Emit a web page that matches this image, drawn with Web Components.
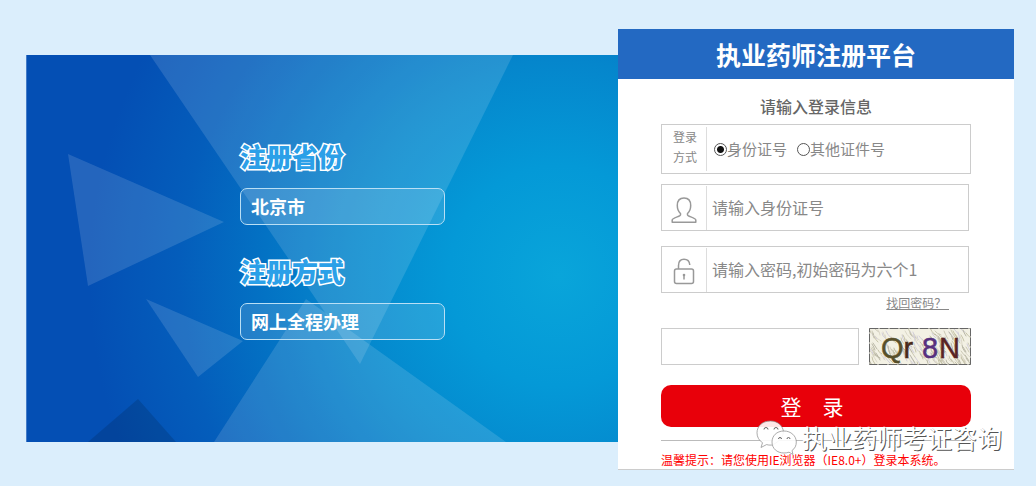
<!DOCTYPE html>
<html lang="zh-CN">
<head>
<meta charset="utf-8">
<meta name="viewport" content="width=device-width, initial-scale=1">
<title>执业药师注册平台</title>
<style>
  html { min-height: 100%; background: #dbeefc; }
  body { margin: 0; font-family: "Noto Sans CJK SC", sans-serif; font-size: 16px; color: #888; }
</style>
</head>
<body>
<login-page>
  <promo-panel slot="promo">
    <choice-field label="注册省份" options="北京市"></choice-field>
    <choice-field label="注册方式" options="网上全程办理"></choice-field>
  </promo-panel>
  <login-card slot="card" heading="执业药师注册平台">
    <login-form></login-form>
    <channel-mark slot="mark">执业药师考证咨询</channel-mark>
  </login-card>
</login-page>

<script>
const define = (name, html, setup) => {
  const template = document.createElement('template');
  template.innerHTML = html;
  customElements.define(name, class extends HTMLElement {
    constructor() {
      super();
      this.attachShadow({ mode: 'open' }).append(template.content.cloneNode(true));
    }
    connectedCallback() { if (setup) setup(this, this.shadowRoot); }
  });
};

define('login-page', `
  <style>
    :host { display: block; padding: 29px 22px 16px 26px; }
    main { display: grid; grid-template-columns: minmax(0, 1fr) 396px; align-items: start; }
    .promo { margin-top: 26px; }
  </style>
  <main>
    <div class="promo"><slot name="promo"></slot></div>
    <slot name="card"></slot>
  </main>`);

define('promo-panel', `
  <style>
    :host {
      display: grid; grid-template-columns: 205px; justify-content: center; align-content: start;
      row-gap: 32px; position: relative; isolation: isolate; box-sizing: border-box;
      min-height: 387px; padding: 87px 0 102px 41px;
      background: radial-gradient(circle at 90% 57%, #09a5da 0, #0499d7 110px, #0586cc 215px, #0372c4 295px, #045dbb 380px, #044fb4 470px);
    }
    svg { position: absolute; inset: 0; width: 100%; height: 100%; z-index: -1; }
  </style>
  <svg viewBox="0 0 592 387" preserveAspectRatio="xMinYMin slice" aria-hidden="true">
    <g fill="#fff" fill-opacity=".13">
      <path d="M124 0H487L334 309Z"/>
      <path d="M42 99L198 167L62 231Z"/>
      <path d="M120 244L217 286L172 322Z"/>
      <path d="M280 244L480 387H188Z"/>
    </g>
    <path d="M112 344L150 387H62Z" fill="#000" fill-opacity=".13"/>
    <path d="M0 0H1V387H0Z" fill="#fff" fill-opacity=".25"/>
  </svg>
  <slot></slot>`);

define('choice-field', `
  <style>
    :host { display: flex; flex-direction: column; gap: 18px; }
    label {
      font-size: 26px; line-height: 28px; font-weight: 900; color: #2ba0e8;
      -webkit-text-stroke: 3px #fff; paint-order: stroke fill; stroke-linejoin: round;
    }
    select {
      appearance: none; box-sizing: border-box; width: 100%; height: 37px; margin: 0; padding: 0 10px 2px;
      border: 1px solid #b9dff5; border-radius: 7px; background: rgba(255, 255, 255, .13);
      font: bold 18px/24px "Noto Sans CJK SC", sans-serif; color: #fff;
    }
    option { color: #333; }
  </style>
  <label for="choice"></label>
  <select id="choice"></select>`, (host, root) => {
    root.querySelector('label').textContent = host.getAttribute('label');
    root.querySelector('select').replaceChildren(
      ...host.getAttribute('options').split(',').map(text => new Option(text)));
});

define('login-card', `
  <style>
    :host { display: block; position: relative; background: #fff; border-bottom: 1px solid #ccc; }
    h1 { margin: 0; background: #2369c2; color: #fff; font-size: 25px; line-height: 50px; font-weight: 700; text-align: center; }
    .body { padding: 15px 43px 0; }
    .mark { position: absolute; right: 12px; bottom: 12px; pointer-events: none; }
  </style>
  <h1></h1>
  <div class="body"><slot></slot></div>
  <div class="mark"><slot name="mark"></slot></div>`, (host, root) => {
    root.querySelector('h1').textContent = host.getAttribute('heading');
});

define('login-form', `
  <style>
    :host { display: block; }
    form { display: flex; flex-direction: column; }
    h2 { margin: 0 0 6px; font-size: 16px; line-height: 24px; font-weight: 500; color: #666; text-align: center; }
    id-kind { margin-bottom: 10px; }
    icon-field { margin-right: 2px; }
    .account { margin-bottom: 15px; }
    a { align-self: flex-end; margin-right: 22px; font-size: 12px; line-height: 20px; color: #888; white-space: pre; }
    .captcha { display: grid; grid-template-columns: minmax(0, 1fr) 102px; gap: 10px; margin: 15px 0 20px; }
    .captcha input { box-sizing: border-box; width: 100%; height: 37px; margin: 0; padding: 0 8px; border: 1px solid #ccc; border-radius: 0; font: inherit; color: #333; }
    button {
      height: 42px; padding: 0 8px 0 0; border: 0; border-radius: 10px; background: #e8000a; color: #fff;
      font: 21px/42px "Noto Sans CJK SC", sans-serif; margin-bottom: 13px;
    }
    p { margin: 0; padding-top: 10px; border-top: 1px solid #bbb; font-size: 12px; line-height: 18px; color: #f00; white-space: nowrap; }
  </style>
  <form onsubmit="return false">
    <h2>请输入登录信息</h2>
    <id-kind></id-kind>
    <icon-field class="account" kind="text" hint="请输入身份证号">
      <svg width="28" height="28" viewBox="0 0 28 28" fill="none" stroke="#999" stroke-width="1.5" stroke-linejoin="round" aria-hidden="true">
        <path d="M10.5 17.5C8.300 15.500 7.300 12.500 7.300 9.500C7.300 5 9.500 2 14 2S20.700 5 20.700 9.500C20.700 12.500 19.700 15.500 17.500 17.500V19C17.500 20.500 25.500 21.500 25.800 24V26.300H2.200V24C2.500 21.500 10.500 20.500 10.500 19Z"/>
      </svg>
    </icon-field>
    <icon-field kind="password" hint="请输入密码,初始密码为六个1">
      <svg width="28" height="28" viewBox="0 0 28 28" fill="none" stroke="#999" stroke-width="1.500" aria-hidden="true">
        <rect x="4.500" y="11" width="19" height="14.500" rx="2"/>
        <path d="M8.500 11V7.500C8.500 3.500 10.500 1.200 14 1.200C17 1.200 19.500 3 19.800 7"/>
        <circle cx="14" cy="17" r="1.300" fill="#999" stroke="none"/>
        <path d="M14 17V21.500"/>
      </svg>
    </icon-field>
    <a href="#recover">找回密码？ </a>
    <div class="captcha">
      <input type="text" aria-label="验证码" autocomplete="off">
      <captcha-image></captcha-image>
    </div>
    <button type="submit">登　录</button>
    <p>温馨提示：请您使用IE浏览器（IE8.0+）登录本系统。</p>
  </form>`);

define('id-kind', `
  <style>
    :host { display: block; }
    fieldset {
      display: grid; grid-template-columns: 45px 1fr; align-items: center; box-sizing: border-box;
      min-width: 0; height: 50px; margin: 0; padding: 2px 0; border: 1px solid #ccc;
    }
    .name { align-self: stretch; padding: 0 9px 0 11px; border-right: 1px solid #ddd; font-size: 12px; line-height: 20px; box-sizing: border-box; }
    .set { display: flex; gap: 10px; padding-left: 7px; }
    label { display: flex; align-items: center; font-size: 15px; line-height: 24px; white-space: nowrap; }
    input { appearance: none; width: 13px; height: 13px; margin: 0; border: 1px solid #555; border-radius: 50%; background: #fff; box-sizing: border-box; }
    input:checked { background: radial-gradient(circle, #111 0 3px, #fff 4px); }
  </style>
  <fieldset aria-labelledby="name">
    <div class="name" id="name">登录<br>方式</div>
    <div class="set">
      <label><input type="radio" name="kind" checked>身份证号</label>
      <label><input type="radio" name="kind">其他证件号</label>
    </div>
  </fieldset>`);

define('icon-field', `
  <style>
    :host { display: block; }
    label {
      display: grid; grid-template-columns: 45px minmax(0, 1fr); box-sizing: border-box;
      height: 47px; padding-top: 1px; border: 1px solid #ccc;
    }
    span { display: grid; place-items: center; border-right: 1px solid #ddd; padding-top: 4px; }
    input { width: 100%; box-sizing: border-box; margin: 0; padding: 0 5px 2px; border: 0; outline: 0; background: none; font: inherit; color: #333; }
    input::placeholder { color: #888; opacity: 1; }
  </style>
  <label><span><slot></slot></span><input></label>`, (host, root) => {
    const input = root.querySelector('input');
    input.type = host.getAttribute('kind');
    input.placeholder = host.getAttribute('hint');
    input.setAttribute('aria-label', input.placeholder);
});

define('captcha-image', `
  <style>
    :host { display: block; height: 37px; }
    svg { display: block; width: 100%; height: 100%; font-family: "Liberation Sans", sans-serif; }
  </style>
  <svg viewBox="0 0 102 37" role="img" aria-label="验证码图片">
    <rect width="102" height="37" fill="#f3f1e4"/>
    <g class="scratches" fill="none" stroke-linecap="round"></g>
    <text x="12" y="30" font-size="29" stroke-width=".5"><tspan fill="#58502a" stroke="#58502a">Q</tspan><tspan fill="#4a2a18" stroke="#4a2a18">r</tspan><tspan x="53" fill="#57307e" stroke="#57307e">8</tspan><tspan x="70" fill="#5a2424" stroke="#5a2424">N</tspan></text>
    <rect x=".5" y=".5" width="101" height="36" fill="none" stroke="#666" stroke-dasharray="9 1"/>
  </svg>`, (host, root) => {
    const group = root.querySelector('.scratches');
    const tones = ['#cbc8b4', '#dcd8c8', '#b9b7a6', '#d3cfdb', '#c6c3a8'];
    let seed = 7;
    const rand = () => (seed = (seed * 16807) % 2147483647) / 2147483647;
    for (let i = 0; i < 190; i++) {
      const path = document.createElementNS('http://www.w3.org/2000/svg', 'path');
      const x = Math.round(rand() * 100), y = Math.round(rand() * 34);
      path.setAttribute('d', `M${x} ${y}q${Math.round(rand() * 3)} 3 ${2 + Math.round(rand() * 4)} ${4 + Math.round(rand() * 5)}`);
      path.setAttribute('stroke', tones[i % tones.length]);
      group.append(path);
    }
});

define('channel-mark', `
  <style>
    :host {
      display: flex; align-items: center; gap: 5px; color: #fff; font-size: 25px; line-height: 36px;
      white-space: nowrap; text-shadow: 1px 1px 0 #555;
    }
    svg { flex: none; }
    span { padding-bottom: 2px; }
  </style>
  <svg width="41" height="36" viewBox="0 0 41 36" aria-hidden="true">
    <g fill="#fff" fill-opacity=".9" stroke="#888" stroke-width=".7">
      <path d="M14.500 1C6.500 1 1 6 1 12.800C1 17 3 20.500 6.500 22.700L5 27.500L10.500 24.600C12 25 13.500 25.200 15.500 25.100C17 25 27 20 27.500 12C27 6 22 1 14.500 1Z"/>
      <path d="M28 11C20.500 11 16 16 16 22C16 28.500 21 33 28 33C30 33 31.500 32.700 33 32.200L37 34.500L36 30.500C39 28.500 40.300 25.500 40.300 22C40.300 16 35 11 28 11Z"/>
    </g>
    <g fill="none" stroke="#666" stroke-width="1">
      <path d="M8 9.500A2 2 0 0 1 12 9.500M18 9.500A2 2 0 0 1 22 9.500M22.500 19A1.500 1.500 0 0 1 25.500 19M31 19A1.500 1.500 0 0 1 34 19"/>
    </g>
  </svg>
  <span><slot></slot></span>`);
</script>
</body>
</html>
